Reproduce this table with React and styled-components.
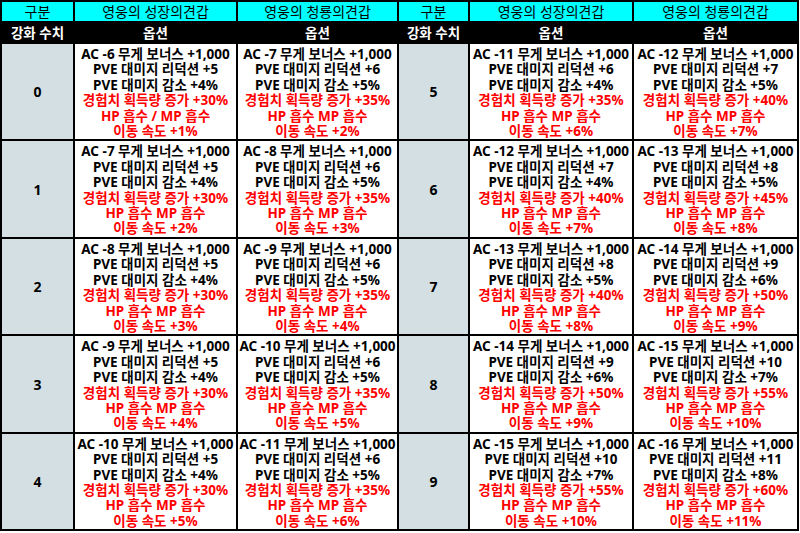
import React from 'react';
import styled, { createGlobalStyle } from 'styled-components';

const GlobalStyle = createGlobalStyle`
	html, body {
		margin: 0;
		padding: 0;
		background: #ffffff;
	}
	body {
		font-family: 'Noto Sans', 'Noto Sans CJK KR', sans-serif;
	}
`;

const makeRow = (ac, red, dec, exp, spd, slash = false) => ({ ac, red, dec, exp, spd, slash });

const rows = [
	{
		left: { level: 0, growth: makeRow(6, 5, 4, 30, 1, true), dragon: makeRow(7, 6, 5, 35, 2) },
		right: { level: 5, growth: makeRow(11, 6, 4, 35, 6), dragon: makeRow(12, 7, 5, 40, 7) },
	},
	{
		left: { level: 1, growth: makeRow(7, 5, 4, 30, 2), dragon: makeRow(8, 6, 5, 35, 3) },
		right: { level: 6, growth: makeRow(12, 7, 4, 40, 7), dragon: makeRow(13, 8, 5, 45, 8) },
	},
	{
		left: { level: 2, growth: makeRow(8, 5, 4, 30, 3), dragon: makeRow(9, 6, 5, 35, 4) },
		right: { level: 7, growth: makeRow(13, 8, 5, 40, 8), dragon: makeRow(14, 9, 6, 50, 9) },
	},
	{
		left: { level: 3, growth: makeRow(9, 5, 4, 30, 4), dragon: makeRow(10, 6, 5, 35, 5) },
		right: { level: 8, growth: makeRow(14, 9, 6, 50, 9), dragon: makeRow(15, 10, 7, 55, 10) },
	},
	{
		left: { level: 4, growth: makeRow(10, 5, 4, 30, 5), dragon: makeRow(11, 6, 5, 35, 6) },
		right: { level: 9, growth: makeRow(15, 10, 7, 55, 10), dragon: makeRow(16, 11, 8, 60, 11) },
	},
];

const Options = ({ value }) => (
	<OptionCell>
		<Line>AC -{value.ac} 무게 보너스 +1,000</Line>
		<Line>PVE 대미지 리덕션 +{value.red}</Line>
		<Line>PVE 대미지 감소 +{value.dec}%</Line>
		<Line $red>경험치 획득량 증가 +{value.exp}%</Line>
		<Line $red>{value.slash ? 'HP 흡수 / MP 흡수' : 'HP 흡수 MP 흡수'}</Line>
		<Line $red>이동 속도 +{value.spd}%</Line>
	</OptionCell>
);

const Side = ({ value }) => (
	<>
		<LevelCell>{value.level}</LevelCell>
		<Options value={value.growth} />
		<Options value={value.dragon} />
	</>
);

const HeaderSide = () => (
	<>
		<TitleCell>구분</TitleCell>
		<TitleCell>영웅의 성장의견갑</TitleCell>
		<TitleCell>영웅의 청룡의견갑</TitleCell>
	</>
);

const SubHeaderSide = () => (
	<>
		<SubCell>강화 수치</SubCell>
		<SubCell>옵션</SubCell>
		<SubCell>옵션</SubCell>
	</>
);

const App = () => (
	<>
		<GlobalStyle />
		<Table>
			<colgroup>
				<col style={{ width: 73 }} />
				<col style={{ width: 163 }} />
				<col style={{ width: 161 }} />
				<col style={{ width: 71 }} />
				<col style={{ width: 164 }} />
				<col style={{ width: 165 }} />
			</colgroup>
			<thead>
				<HeadRow>
					<HeaderSide />
					<HeaderSide />
				</HeadRow>
				<HeadRow>
					<SubHeaderSide />
					<SubHeaderSide />
				</HeadRow>
			</thead>
			<tbody>
				{rows.map((row) => (
					<DataRow key={row.left.level}>
						<Side value={row.left} />
						<Side value={row.right} />
					</DataRow>
				))}
			</tbody>
		</Table>
	</>
);

const Table = styled.table`
	width: 799px;
	border-collapse: collapse;
	table-layout: fixed;
	box-shadow: 0 2px 0 #c8c8c8;

	td, th {
		border: 2px solid #000;
		padding: 0;
		text-align: center;
		white-space: nowrap;
		overflow: hidden;
	}
`;

const HeadRow = styled.tr`
	height: 21px;
`;

const TitleCell = styled.th`
	background: #00ffff;
	color: #000;
	font-size: 14px;
	font-weight: 400;
	line-height: 18px;
`;

const SubCell = styled.th`
	background: #000;
	color: #fff;
	font-size: 13.5px;
	font-weight: 700;
	line-height: 18px;
`;

const DataRow = styled.tr`
	height: 97px;
`;

const LevelCell = styled.td`
	background: #d3dfe3;
	color: #000;
	font-size: 14px;
	font-weight: 700;
`;

const OptionCell = styled.td`
	background: #fff;
	vertical-align: middle;
	padding-top: 3px !important;
`;

const Line = styled.div`
	font-size: 13.5px;
	font-weight: 700;
	line-height: 15.4px;
	color: ${({ $red }) => ($red ? '#ff0000' : '#000')};
`;

export default App;
